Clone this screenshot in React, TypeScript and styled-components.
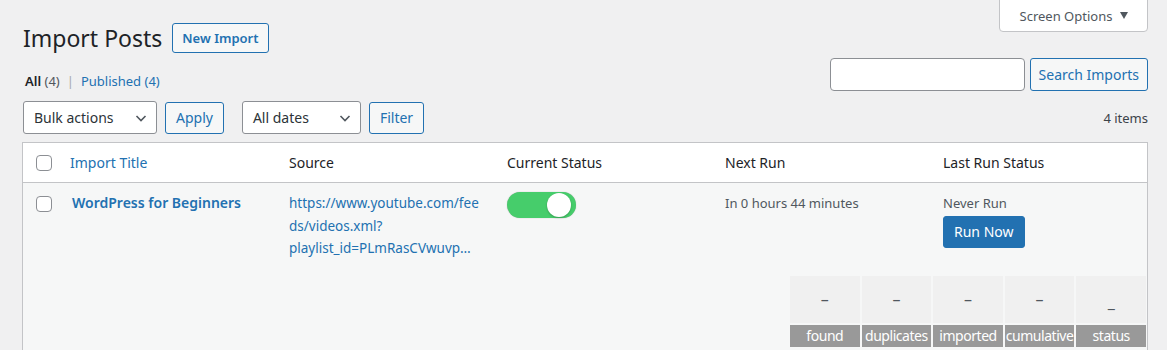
import React, { useState } from "react";
import styled, { createGlobalStyle } from "styled-components";

const GlobalStyle = createGlobalStyle`
  html, body {
    margin: 0;
    padding: 0;
    background: #f0f0f1;
    font-family: "Segoe UI", "Noto Sans", sans-serif;
    color: #3c434a;
  }
  * { box-sizing: border-box; }
`;

const Wrap = styled.div`
  padding: 0 19px 0 22px;
  width: 1167px;
  height: 350px;
  overflow: hidden;
`;

const TopRow = styled.div`
  display: flex;
  justify-content: space-between;
  align-items: flex-start;
`;

const TitleGroup = styled.div`
  display: flex;
  align-items: center;
  gap: 10px;
  margin-top: 23px;
  padding-left: 1px;
`;

const PageTitle = styled.h1`
  margin: 0;
  font-size: 23px;
  font-weight: 400;
  line-height: 30px;
  color: #1d2327;
`;

const OutlineButton = styled.button<{ $height?: number; $pad?: number }>`
  height: ${(p) => p.$height ?? 32}px;
  padding: 0 ${(p) => p.$pad ?? 10}px;
  border: 1px solid #2271b1;
  border-radius: 3px;
  background: #f6f7f7;
  color: #2271b1;
  font-family: inherit;
  font-size: 14px;
  line-height: 1;
  cursor: pointer;
`;

const NewImport = styled(OutlineButton)`
  font-size: 13px;
  font-weight: 600;
`;

const ScreenOptions = styled.button`
  height: 33px;
  margin-top: -1px;
  width: 149px;
  border: 1px solid #c3c4c7;
  border-radius: 0 0 4px 4px;
  background: #fff;
  color: #50575e;
  font-family: inherit;
  font-size: 13px;
  display: flex;
  align-items: center;
  justify-content: center;
  gap: 8px;
  padding: 0 0 0 1px;
`;

const Caret = styled.span`
  width: 0;
  height: 0;
  border-left: 4px solid transparent;
  border-right: 4px solid transparent;
  border-top: 7px solid #50575e;
`;

const FilterRow = styled.div`
  display: flex;
  justify-content: space-between;
  align-items: flex-start;
  margin-top: 5px;
`;

const Views = styled.ul`
  list-style: none;
  margin: 14px 0 0 3px;
  padding: 0;
  display: flex;
  align-items: center;
  font-size: 13px;
  color: #50575e;
`;

const ViewLink = styled.a<{ $current?: boolean }>`
  color: ${(p) => (p.$current ? "#1d2327" : "#2271b1")};
  font-weight: ${(p) => (p.$current ? 600 : 400)};
  text-decoration: none;
`;

const Count = styled.span<{ $blue?: boolean }>`
  color: ${(p) => (p.$blue ? "#2271b1" : "#50575e")};
  font-weight: 400;
`;

const Sep = styled.span`
  color: #a7aaad;
  margin: 0 7px;
`;

const SearchBox = styled.div`
  display: flex;
  gap: 5px;
`;

const SearchInput = styled.input`
  width: 195px;
  height: 33px;
  border: 1px solid #8c8f94;
  border-radius: 4px;
  background: #fff;
  padding: 0 8px;
  font-family: inherit;
`;

const NavRow = styled.div`
  display: flex;
  align-items: center;
  margin-top: 10px;
  gap: 8px;
  padding-left: 1px;
`;

const SelectBox = styled.div<{ $width: number }>`
  width: ${(p) => p.$width}px;
  height: 33px;
  border: 1px solid #8c8f94;
  border-radius: 3px;
  background: #fff;
  color: #2c3338;
  font-size: 14px;
  display: flex;
  align-items: center;
  justify-content: space-between;
  padding: 0 9px 0 10px;
`;

const Spacer = styled.div<{ $w: number }>`
  width: ${(p) => p.$w}px;
`;

const ItemCount = styled.div`
  margin-left: auto;
  font-size: 13px;
  color: #3c434a;
`;

const Table = styled.div`
  margin-top: 8px;
  border: 1px solid #c3c4c7;
  border-bottom: none;
  background: #f6f7f7;
`;

const cols = "39px 219px 218px 218px 218px 1fr";

const HeadRow = styled.div`
  display: grid;
  grid-template-columns: ${cols};
  height: 40px;
  align-items: center;
  background: #fff;
  border-bottom: 1px solid #c3c4c7;
`;

const HeadCell = styled.div<{ $link?: boolean }>`
  padding: 0 8px;
  font-size: 14px;
  color: ${(p) => (p.$link ? "#2271b1" : "#1d2327")};
`;

const CheckCell = styled.div<{ $top?: number }>`
  display: flex;
  justify-content: flex-start;
  padding-left: 13px;
  padding-top: ${(p) => p.$top ?? 0}px;
`;

const Check = styled.span`
  display: block;
  width: 16px;
  height: 16px;
  border: 1px solid #8c8f94;
  border-radius: 4px;
  background: #fff;
`;

const BodyRow = styled.div`
  display: grid;
  grid-template-columns: ${cols};
  align-items: start;
  padding-top: 9px;
`;

const Cell = styled.div`
  padding: 0 8px;
  font-size: 13px;
  line-height: 22.5px;
`;

const RowTitle = styled.a`
  display: block;
  padding-left: 2px;
  font-size: 14px;
  font-weight: 600;
  color: #2271b1;
  text-decoration: none;
`;

const SourceLink = styled.a`
  display: block;
  color: #2271b1;
  text-decoration: none;
  white-space: nowrap;
  font-size: 13.5px;
`;

const Toggle = styled.button<{ $on: boolean }>`
  position: relative;
  width: 69px;
  height: 26px;
  border: none;
  border-radius: 13px;
  background: ${(p) => (p.$on ? "#46cd6b" : "#c3c4c7")};
  box-shadow: 0 0 1px rgba(0, 0, 0, 0.35);
  cursor: pointer;
  padding: 0;
`;

const Knob = styled.span<{ $on: boolean }>`
  position: absolute;
  top: 1px;
  left: ${(p) => (p.$on ? "40px" : "2px")};
  width: 24px;
  height: 24px;
  border-radius: 50%;
  background: #fff;
  box-shadow: 0 1px 2px rgba(0, 0, 0, 0.25);
`;

const Muted = styled.div`
  color: #50575e;
`;

const RunNow = styled.button`
  margin-top: 1px;
  height: 32px;
  padding: 0 10px;
  border: 1px solid #2271b1;
  border-radius: 3px;
  background: #2271b1;
  color: #fff;
  font-family: inherit;
  font-size: 14px;
  cursor: pointer;
`;

const StatsRow = styled.div`
  display: flex;
  justify-content: flex-end;
  padding: 16px 1px 12px 0;
`;

const Stats = styled.div`
  width: 356px;
  display: grid;
  grid-template-columns: repeat(5, 1fr);
  grid-template-rows: 47px 22px;
  gap: 2px;
`;

const StatValue = styled.div<{ $low?: boolean }>`
  background: #f0f0f0;
  display: flex;
  align-items: center;
  justify-content: center;
  padding-top: ${(p) => (p.$low ? "6px" : "0")};
  font-size: 16px;
  color: #50575e;
`;

const StatLabel = styled.div`
  background: #999;
  color: #fff;
  font-size: 14px;
  display: flex;
  align-items: center;
  justify-content: center;
  white-space: nowrap;
  letter-spacing: -0.45px;
  overflow: hidden;
`;

const Chevron = () => (
  <svg width="12" height="12" viewBox="0 0 12 12" fill="none">
    <path d="M1.5 4l4.5 4.5L10.5 4" stroke="#50575e" strokeWidth="1.6" />
  </svg>
);

const stats = ["found", "duplicates", "imported", "cumulative", "status"];

export default function App() {
  const [on, setOn] = useState(true);
  return (
    <Wrap>
      <GlobalStyle />
      <TopRow>
        <TitleGroup>
          <PageTitle>Import Posts</PageTitle>
          <NewImport $height={30} $pad={9}>
            New Import
          </NewImport>
        </TitleGroup>
        <ScreenOptions>
          Screen Options <Caret />
        </ScreenOptions>
      </TopRow>

      <FilterRow>
        <Views>
          <li>
            <ViewLink $current>
              All <Count>(4)</Count>
            </ViewLink>
            <Sep>|</Sep>
          </li>
          <li>
            <ViewLink>
              Published <Count $blue>(4)</Count>
            </ViewLink>
          </li>
        </Views>
        <SearchBox>
          <SearchInput type="search" />
          <OutlineButton $height={33} $pad={8}>
            Search Imports
          </OutlineButton>
        </SearchBox>
      </FilterRow>

      <NavRow>
        <SelectBox $width={134}>
          Bulk actions <Chevron />
        </SelectBox>
        <OutlineButton>Apply</OutlineButton>
        <Spacer $w={2} />
        <SelectBox $width={119}>
          All dates <Chevron />
        </SelectBox>
        <OutlineButton>Filter</OutlineButton>
        <ItemCount>4 items</ItemCount>
      </NavRow>

      <Table>
        <HeadRow>
          <CheckCell>
            <Check />
          </CheckCell>
          <HeadCell $link>Import Title</HeadCell>
          <HeadCell>Source</HeadCell>
          <HeadCell>Current Status</HeadCell>
          <HeadCell>Next Run</HeadCell>
          <HeadCell>Last Run Status</HeadCell>
        </HeadRow>
        <BodyRow>
          <CheckCell $top={4}>
            <Check />
          </CheckCell>
          <Cell>
            <RowTitle>WordPress for Beginners</RowTitle>
          </Cell>
          <Cell>
            <SourceLink>
              https://www.youtube.com/fee
              <br />
              ds/videos.xml?
              <br />
              playlist_id=PLmRasCVwuvp…
            </SourceLink>
          </Cell>
          <Cell>
            <Toggle $on={on} onClick={() => setOn(!on)}>
              <Knob $on={on} />
            </Toggle>
          </Cell>
          <Cell>
            <Muted>In 0 hours 44 minutes</Muted>
          </Cell>
          <Cell>
            <Muted>Never Run</Muted>
            <RunNow>Run Now</RunNow>
          </Cell>
        </BodyRow>
        <StatsRow>
          <Stats>
            {stats.map((s) => (
              <StatValue key={s} $low={s === "status"}>
                {s === "status" ? "_" : "–"}
              </StatValue>
            ))}
            {stats.map((s) => (
              <StatLabel key={s}>{s}</StatLabel>
            ))}
          </Stats>
        </StatsRow>
      </Table>
    </Wrap>
  );
}
